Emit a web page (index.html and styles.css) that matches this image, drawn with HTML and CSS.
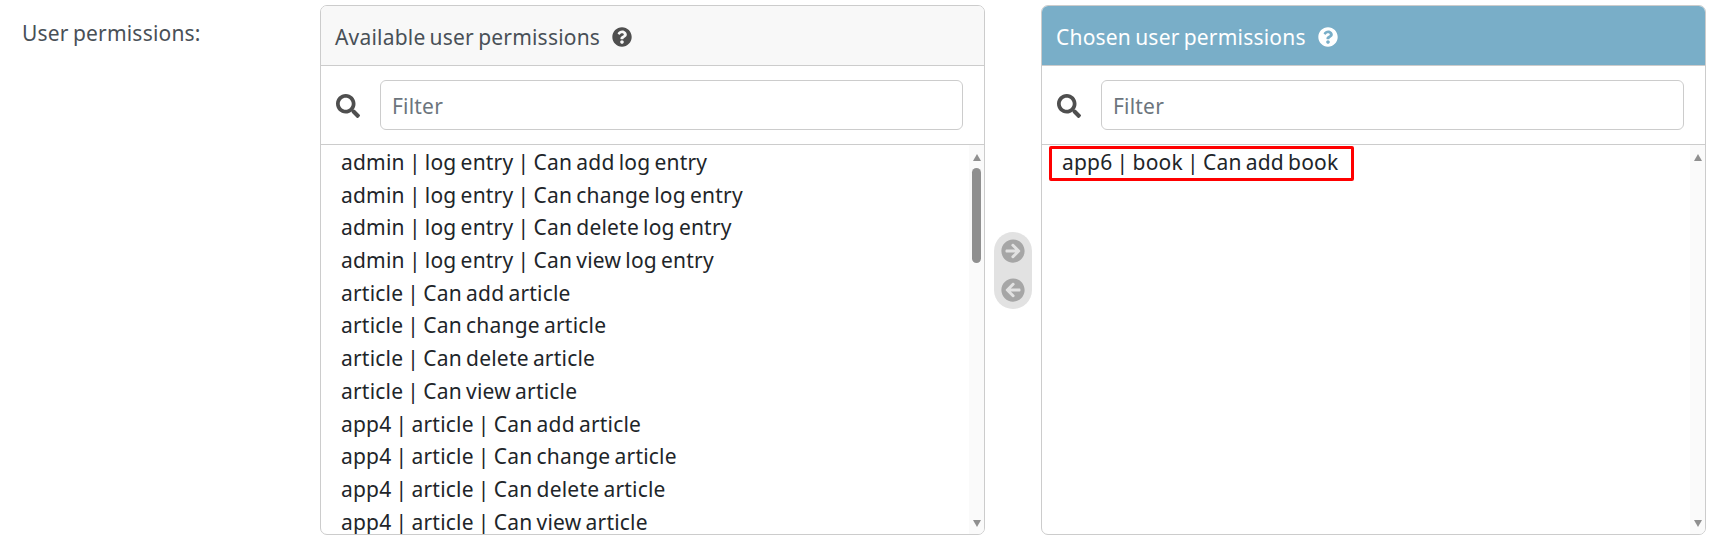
FILE: index.html
```html
<!DOCTYPE html>
<html lang="en">
<head>
    <meta charset="UTF-8">
    <meta name="viewport" content="width=device-width, initial-scale=1.0">
    <title>User permissions</title>
    <link rel="stylesheet" href="styles.css">
</head>
<body>
    <div class="form-row">
        <label class="field-label" for="availableFilter">User permissions:</label>

        <div class="selector">
            <div class="selector-box">
                <h2 class="selector-title">Available user permissions
                    <svg class="help-icon" viewBox="0 0 512 512"><path d="M504 256c0 136.997-111.043 248-248 248S8 392.997 8 256C8 119.083 119.043 8 256 8s248 111.083 248 248zM262.655 90c-54.497 0-89.255 22.957-116.549 63.758-3.536 5.286-2.353 12.415 2.715 16.258l34.699 26.31c5.205 3.947 12.621 3.008 16.665-2.122 17.864-22.658 30.113-35.797 57.303-35.797 20.429 0 45.698 13.148 45.698 32.958 0 14.976-12.363 22.667-32.534 33.976C247.128 238.528 216 254.941 216 296v4c0 6.627 5.373 12 12 12h56c6.627 0 12-5.373 12-12v-1.333c0-28.462 83.186-29.647 83.186-106.667 0-58.002-60.165-102-116.531-102zM256 338c-25.365 0-46 20.635-46 46 0 25.364 20.635 46 46 46s46-20.636 46-46c0-25.365-20.635-46-46-46z"/></svg>
                </h2>
                <div class="filter-row">
                    <svg class="search-icon" viewBox="0 0 512 512"><path d="M505 442.7L405.3 343c-4.5-4.5-10.6-7-17-7H372c27.6-35.3 44-79.7 44-128C416 93.1 322.9 0 208 0S0 93.1 0 208s93.1 208 208 208c48.3 0 92.7-16.4 128-44v16.3c0 6.4 2.5 12.5 7 17l99.7 99.7c9.4 9.4 24.6 9.4 33.9 0l28.3-28.3c9.4-9.4 9.4-24.6.1-34zM208 336c-70.7 0-128-57.2-128-128 0-70.7 57.2-128 128-128 70.7 0 128 57.2 128 128 0 70.7-57.2 128-128 128z"/></svg>
                    <input class="filter-input" id="availableFilter" type="text" placeholder="Filter">
                </div>
                <div class="list-wrap">
                    <ul class="option-list">
                        <li>admin | log entry | Can add log entry</li>
                        <li>admin | log entry | Can change log entry</li>
                        <li>admin | log entry | Can delete log entry</li>
                        <li>admin | log entry | Can view log entry</li>
                        <li>article | Can add article</li>
                        <li>article | Can change article</li>
                        <li>article | Can delete article</li>
                        <li>article | Can view article</li>
                        <li>app4 | article | Can add article</li>
                        <li>app4 | article | Can change article</li>
                        <li>app4 | article | Can delete article</li>
                        <li>app4 | article | Can view article</li>
                    </ul>
                    <div class="scrollbar">
                        <span class="arrow-up"></span>
                        <span class="thumb"></span>
                        <span class="arrow-down"></span>
                    </div>
                </div>
            </div>

            <div class="move-buttons">
                <svg class="move-icon" viewBox="0 0 512 512"><path d="M256 8c137 0 248 111 248 248S393 504 256 504 8 393 8 256 119 8 256 8zm-28.9 143.6l75.5 72.4H120c-13.3 0-24 10.7-24 24v16c0 13.3 10.7 24 24 24h182.6l-75.5 72.4c-9.7 9.3-9.9 24.8-.4 34.3l11 10.9c9.4 9.4 24.6 9.4 33.9 0L404.3 273c9.4-9.4 9.4-24.6 0-33.9L271.6 106.3c-9.4-9.4-24.6-9.4-33.9 0l-11 10.9c-9.5 9.6-9.3 25.1.4 34.4z"/></svg>
                <svg class="move-icon" viewBox="0 0 512 512"><path d="M256 504C119 504 8 393 8 256S119 8 256 8s248 111 248 248-111 248-248 248zm28.9-143.6L209.4 288H392c13.3 0 24-10.7 24-24v-16c0-13.3-10.7-24-24-24H209.4l75.5-72.4c9.7-9.3 9.9-24.8.4-34.3l-11-10.9c-9.4-9.4-24.6-9.4-33.9 0L107.7 239c-9.4 9.4-9.4 24.6 0 33.9l132.7 132.7c9.4 9.4 24.6 9.4 33.9 0l11-10.9c9.5-9.5 9.3-25-.4-34.3z"/></svg>
            </div>

            <div class="selector-box">
                <h2 class="selector-title is-chosen">Chosen user permissions
                    <svg class="help-icon" viewBox="0 0 512 512"><path d="M504 256c0 136.997-111.043 248-248 248S8 392.997 8 256C8 119.083 119.043 8 256 8s248 111.083 248 248zM262.655 90c-54.497 0-89.255 22.957-116.549 63.758-3.536 5.286-2.353 12.415 2.715 16.258l34.699 26.31c5.205 3.947 12.621 3.008 16.665-2.122 17.864-22.658 30.113-35.797 57.303-35.797 20.429 0 45.698 13.148 45.698 32.958 0 14.976-12.363 22.667-32.534 33.976C247.128 238.528 216 254.941 216 296v4c0 6.627 5.373 12 12 12h56c6.627 0 12-5.373 12-12v-1.333c0-28.462 83.186-29.647 83.186-106.667 0-58.002-60.165-102-116.531-102zM256 338c-25.365 0-46 20.635-46 46 0 25.364 20.635 46 46 46s46-20.636 46-46c0-25.365-20.635-46-46-46z"/></svg>
                </h2>
                <div class="filter-row">
                    <svg class="search-icon" viewBox="0 0 512 512"><path d="M505 442.7L405.3 343c-4.5-4.5-10.6-7-17-7H372c27.6-35.3 44-79.7 44-128C416 93.1 322.9 0 208 0S0 93.1 0 208s93.1 208 208 208c48.3 0 92.7-16.4 128-44v16.3c0 6.4 2.5 12.5 7 17l99.7 99.7c9.4 9.4 24.6 9.4 33.9 0l28.3-28.3c9.4-9.4 9.4-24.6.1-34zM208 336c-70.7 0-128-57.2-128-128 0-70.7 57.2-128 128-128 70.7 0 128 57.2 128 128 0 70.7-57.2 128-128 128z"/></svg>
                    <input class="filter-input" type="text" placeholder="Filter">
                </div>
                <div class="list-wrap">
                    <ul class="option-list">
                        <li class="is-marked">app6 | book | Can add book</li>
                    </ul>
                    <div class="scrollbar">
                        <span class="arrow-up"></span>
                        <span class="arrow-down"></span>
                    </div>
                </div>
            </div>
        </div>
    </div>
</body>
</html>
```

FILE: styles.css
```css
body {
    font-family: "Noto Sans", "Open Sans", Arial, sans-serif;
    font-size: 21px;
    word-spacing: -1.5px;
    letter-spacing: 0.2px;
    background-color: #fff;
    color: #212529;
    margin: 0;
    overflow: hidden;
}
.form-row {
    display: flex;
    height: 544px;
    box-sizing: border-box;
    padding: 5px 3px 9px 22px;
}
.field-label {
    width: 298px;
    flex: none;
    padding-top: 14px;
    color: #495057;
}
.selector {
    display: flex;
    flex: 1;
    align-items: stretch;
}
.selector-box {
    flex: 1;
    display: flex;
    flex-direction: column;
    border: 1px solid #ccc;
    border-radius: 7px;
    overflow: hidden;
}
.selector-title {
    display: flex;
    align-items: center;
    gap: 12px;
    height: 57px;
    flex: none;
    margin: 0;
    padding: 2px 14px 0;
    font-size: inherit;
    font-weight: 400;
    background-color: #f8f8f8;
    color: #495057;
    border-bottom: 1px solid #ccc;
}
.selector-title.is-chosen {
    background-color: #79aec8;
    color: #fff;
}
.help-icon {
    width: 20px;
    height: 20px;
    fill: #4f4f4f;
}
.is-chosen .help-icon {
    fill: #fff;
}
.filter-row {
    display: flex;
    align-items: center;
    gap: 20px;
    height: 79px;
    flex: none;
    box-sizing: border-box;
    padding: 0 21px 0 15px;
    border-bottom: 1px solid #ccc;
}
.search-icon {
    width: 24px;
    height: 24px;
    flex: none;
    margin-top: 2px;
    fill: #4f4f4f;
}
.filter-input {
    flex: 1;
    min-width: 0;
    height: 50px;
    box-sizing: border-box;
    padding: 2px 11px 0;
    font: inherit;
    letter-spacing: inherit;
    color: #495057;
    border: 1px solid #ccc;
    border-radius: 6px;
}
.filter-input::placeholder {
    color: #6c757d;
    opacity: 1;
}
.list-wrap {
    flex: 1;
    display: flex;
    min-height: 0;
}
.option-list {
    flex: 1;
    list-style: none;
    margin: 0;
    padding: 1px 0 0;
    overflow: hidden;
}
.option-list li {
    height: 32.7px;
    line-height: 32.7px;
    padding-left: 20px;
    white-space: nowrap;
}
.option-list .is-marked {
    width: fit-content;
    height: 35px;
    line-height: 26px;
    box-sizing: border-box;
    margin: 0 0 0 7px;
    padding: 0 13px 0 10px;
    border: 3px solid #f00;
    border-radius: 2px;
}
.scrollbar {
    width: 15px;
    flex: none;
    display: flex;
    flex-direction: column;
    align-items: center;
    background-color: #fafafa;
    padding: 9px 0 7px;
    box-sizing: border-box;
}
.arrow-up,
.arrow-down {
    width: 0;
    height: 0;
    border-left: 4.5px solid transparent;
    border-right: 4.5px solid transparent;
}
.arrow-up {
    border-bottom: 7px solid #8f8f8f;
}
.arrow-down {
    border-top: 7px solid #8f8f8f;
    margin-top: auto;
}
.thumb {
    width: 9px;
    height: 95px;
    margin-top: 7px;
    border-radius: 5px;
    background-color: #8f8f8f;
}
.move-buttons {
    flex: none;
    align-self: flex-start;
    display: flex;
    flex-direction: column;
    align-items: center;
    gap: 15px;
    width: 38px;
    box-sizing: border-box;
    margin: 227px 9px 0;
    padding: 7px 0;
    border-radius: 19px;
    background-color: #e2e2e2;
}
.move-icon {
    width: 24px;
    height: 24px;
    fill: #a6a6a6;
}
```
